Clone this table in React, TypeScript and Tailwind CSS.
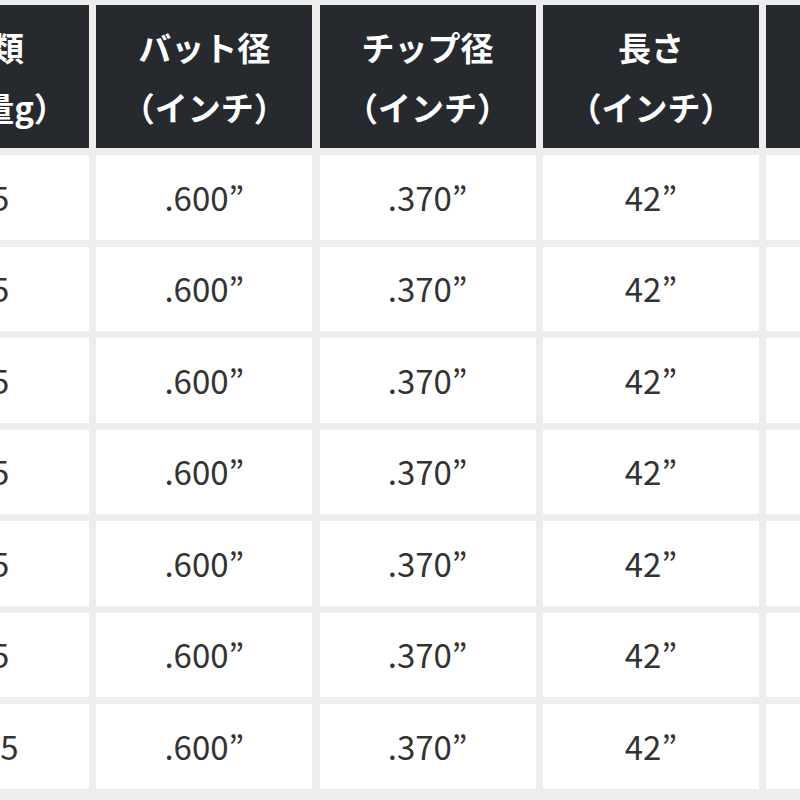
import React from "react";

const headers: [string, string][] = [
  ["種類", "（重量g）"],
  ["バット径", "（インチ）"],
  ["チップ径", "（インチ）"],
  ["長さ", "（インチ）"],
  ["トルク", "（度）"],
];

const weights = ["45", "55", "65", "75", "85", "95", "105"];

export default function App() {
  return (
    <div
      className="w-[800px] h-[800px] overflow-hidden bg-[#ededed]"
      style={{ fontFamily: '"Noto Sans CJK JP", "Noto Sans", sans-serif' }}
    >
      <div className="ml-[-107px] mt-[5px] grid w-max grid-cols-[196px_216px_216px_216px_216px] gap-x-[7.3px] gap-y-[7px]">
        {headers.map(([a, b], i) => (
          <div
            key={"h" + i}
            className="flex h-[143px] flex-col items-center justify-center bg-[#26292e] text-[33px] font-bold leading-[60px] text-white"
          >
            <span>{a}</span>
            <span>{b}</span>
          </div>
        ))}
        {weights.map((w, r) => (
          <React.Fragment key={"r" + r}>
            <div className="flex h-[84.5px] items-center justify-center bg-white text-[33px] text-[#333333]">
              {w}
            </div>
            <div className="flex h-[84.5px] items-center justify-center bg-white text-[33px] text-[#333333]">
              .600”
            </div>
            <div className="flex h-[84.5px] items-center justify-center bg-white text-[33px] text-[#333333]">
              .370”
            </div>
            <div className="flex h-[84.5px] items-center justify-center bg-white text-[33px] text-[#333333]">
              42”
            </div>
            <div className="flex h-[84.5px] items-center justify-center bg-white text-[33px] text-[#333333]">
              3.5
            </div>
          </React.Fragment>
        ))}
      </div>
    </div>
  );
}
